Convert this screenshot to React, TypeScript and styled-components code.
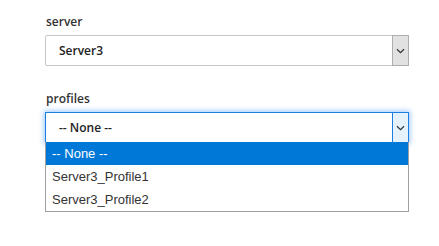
import React from 'react';
import styled, { createGlobalStyle } from 'styled-components';

const GlobalStyle = createGlobalStyle`
  html, body {
    margin: 0;
    height: 100%;
    background: #fff;
  }
  #root {
    min-height: 100%;
  }
`;

const Form = styled.div`
  width: 409px;
  min-height: 246px;
  box-sizing: border-box;
  padding: 13px 0 0 45px;
  display: flex;
  flex-direction: column;
`;

const Field = styled.div`
  display: flex;
  flex-direction: column;
  margin-bottom: 24px;
`;

const Label = styled.label`
  font-family: 'Open Sans', 'Noto Sans', sans-serif;
  font-weight: 600;
  font-size: 12px;
  color: #333;
  line-height: 17px;
  margin: 0 0 5px 1px;
`;

const SelectBox = styled.div<{ $focused?: boolean }>`
  position: relative;
  height: 31px;
  box-sizing: border-box;
  display: flex;
  align-items: stretch;
  border: 1px solid ${(p) => (p.$focused ? '#1c7ee0' : '#c6c6c6')};
  border-radius: ${(p) => (p.$focused ? '0' : '2px')};
  box-shadow: ${(p) => (p.$focused ? '0 0 5px 1px rgba(70, 150, 255, 0.55)' : 'none')};
  background: #fff;
`;

const Value = styled.div`
  flex: 1;
  display: flex;
  align-items: center;
  padding-left: 13px;
  font-family: 'Open Sans', 'Noto Sans', sans-serif;
  font-weight: 600;
  font-size: 12px;
  color: #222;
`;

const ArrowButton = styled.div<{ $focused?: boolean }>`
  width: 17px;
  margin: -1px -1px -1px 0;
  box-sizing: border-box;
  display: flex;
  align-items: center;
  justify-content: center;
  border: 1px solid ${(p) => (p.$focused ? '#1c7ee0' : '#adadad')};
  background: ${(p) => (p.$focused ? '#e5f1fb' : '#e1e1e1')};
  color: #333;
`;

const List = styled.div`
  position: absolute;
  top: 100%;
  left: -1px;
  right: -1px;
  display: flex;
  flex-direction: column;
  border: 1px solid #a0a0a0;
  border-top: none;
  background: #fff;
  z-index: 2;
`;

const Item = styled.div<{ $selected?: boolean }>`
  flex: none;
  height: 23px;
  display: flex;
  align-items: center;
  padding-left: 6px;
  font-family: 'Liberation Sans', Arial, sans-serif;
  font-size: 13px;
  color: ${(p) => (p.$selected ? '#fff' : '#333')};
  background: ${(p) => (p.$selected ? '#0078d7' : '#fff')};
`;

function Chevron() {
  return (
    <svg width="9" height="6" viewBox="0 0 9 6">
      <path d="M1 1.2 L4.5 4.6 L8 1.2" fill="none" stroke="currentColor" strokeWidth="1.2" />
    </svg>
  );
}

const profiles = ['-- None --', 'Server3_Profile1', 'Server3_Profile2'];

export default function App() {
  return (
    <>
      <GlobalStyle />
      <Form>
        <Field>
          <Label>server</Label>
          <SelectBox>
            <Value>Server3</Value>
            <ArrowButton>
              <Chevron />
            </ArrowButton>
          </SelectBox>
        </Field>
        <Field>
          <Label>profiles</Label>
          <SelectBox $focused>
            <Value>-- None --</Value>
            <ArrowButton $focused>
              <Chevron />
            </ArrowButton>
            <List>
              {profiles.map((p, i) => (
                <Item key={p} $selected={i === 0}>
                  {p}
                </Item>
              ))}
            </List>
          </SelectBox>
        </Field>
      </Form>
    </>
  );
}
